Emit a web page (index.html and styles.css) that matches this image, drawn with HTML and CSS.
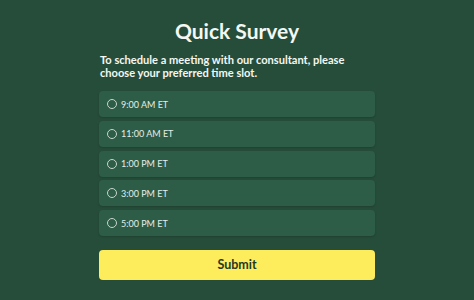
FILE: index.html
```html
<!DOCTYPE html>
<html lang="en">

<head>
    <meta charset="UTF-8" />
    <meta name="viewport" content="width=device-width, initial-scale=1.0" />
    <title>Quick Survey</title>
    <link rel="stylesheet" href="styles.css">
</head>

<body>
    <main class="survey">
        <h1 class="title">Quick Survey</h1>
        <p class="question">To schedule a meeting with our consultant, please choose your preferred time slot.</p>
        <form class="options">
            <label class="option"><span class="radio"></span>9:00 AM ET</label>
            <label class="option"><span class="radio"></span>11:00 AM ET</label>
            <label class="option"><span class="radio"></span>1:00 PM ET</label>
            <label class="option"><span class="radio"></span>3:00 PM ET</label>
            <label class="option"><span class="radio"></span>5:00 PM ET</label>
            <button type="button" class="submit">Submit</button>
        </form>
    </main>
</body>

</html>
```

FILE: styles.css
```css
* {
    box-sizing: border-box;
    margin: 0;
    padding: 0;
}

body {
    background: #264d3a;
    font-family: Lato, "Noto Sans", sans-serif;
    color: #f4f7f2;
}

.survey {
    width: 276px;
    margin: 0 auto;
    padding-top: 16px;
}

.title {
    text-align: center;
    font-size: 21px;
    font-weight: 700;
    line-height: 30px;
}

.question {
    margin-top: 8px;
    font-size: 11.1px;
    font-weight: 700;
    line-height: 12.5px;
    padding-left: 1px;
}

.options {
    display: flex;
    flex-direction: column;
    gap: 3.75px;
    margin-top: 12px;
}

.option {
    display: flex;
    align-items: center;
    gap: 4px;
    height: 26px;
    padding-left: 8px;
    background: #2d5d46;
    border-radius: 4px;
    box-shadow: 0 1px 2px rgba(0, 0, 0, 0.18);
    font-size: 9px;
    color: #e6ede8;
}

.radio {
    width: 10px;
    height: 10px;
    border: 1px solid #c9d6cf;
    border-radius: 50%;
}

.submit {
    margin-top: 10px;
    height: 30px;
    border: 0;
    border-radius: 4px;
    background: #fdec5c;
    color: #1e3a27;
    font-family: inherit;
    font-size: 12.5px;
    font-weight: 700;
}
```
